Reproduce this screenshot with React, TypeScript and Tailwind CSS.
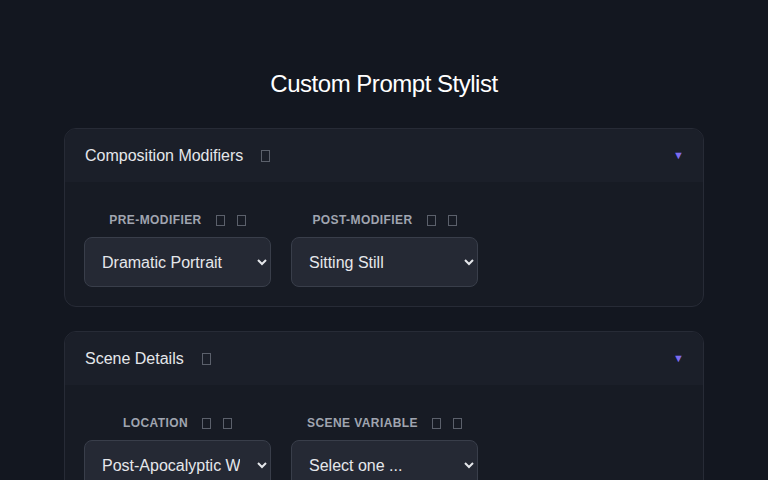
import React from "react";

const SECTIONS = [
  {
    title: "Composition Modifiers",
    fields: [
      { label: "Pre-Modifier", value: "Dramatic Portrait" },
      { label: "Post-Modifier", value: "Sitting Still" },
    ],
  },
  {
    title: "Scene Details",
    fields: [
      { label: "Location", value: "Post-Apocalyptic Wasteland" },
      { label: "Scene Variable", value: "Select one ..." },
    ],
  },
];

// stands in for the emoji that the reference shows as missing-glyph boxes
function Tofu({ className = "" }: { className?: string }) {
  return <span className={`inline-block border border-[#5b606b] ${className}`} />;
}

function Field({ label, value }: { label: string; value: string }) {
  return (
    <div className="flex w-[187px] flex-col">
      <div className="mb-[10px] flex h-[14px] items-center justify-center gap-[14px]">
        <span className="text-[12px] font-bold uppercase tracking-[0.035em] text-[#a0a5b0]">{label}</span>
        <span className="flex gap-[12px]">
          <Tofu className="h-[11px] w-[9px]" />
          <Tofu className="h-[11px] w-[9px]" />
        </span>
      </div>
      <select
        defaultValue={value}
        className="h-[50px] w-full rounded-lg border border-[#393e4a] bg-[#252934] pl-[13px] pr-[14px] text-[16px] text-[#e5e7eb] [color-scheme:dark]"
      >
        <option>{value}</option>
      </select>
    </div>
  );
}

export default function App() {
  return (
    <div className="min-h-screen bg-[#131720] px-16 pt-[66px] font-['Liberation_Sans',Arial,sans-serif]">
      <h1 className="mb-[26px] text-center text-[24px] tracking-[-0.02em] text-white">Custom Prompt Stylist</h1>
      <div className="flex flex-col gap-[24px]">
        {SECTIONS.map((s) => (
          <section key={s.title} className="overflow-hidden rounded-xl border border-[#272b36] bg-[#171b24]">
            <div className="flex h-[53px] items-center justify-between bg-[#1b1f29] pl-5 pr-[19px]">
              <div className="flex items-center text-[16px] text-[#e5e7eb]">
                {s.title}
                <Tofu className="ml-[18px] h-[12px] w-[9px]" />
              </div>
              <span className="text-[11px] text-[#7c6cf0]">▼</span>
            </div>
            <div className="flex gap-5 pb-[19px] pl-[19px] pr-5 pt-[31px]">
              {s.fields.map((f) => (
                <Field key={f.label} {...f} />
              ))}
            </div>
          </section>
        ))}
      </div>
    </div>
  );
}
